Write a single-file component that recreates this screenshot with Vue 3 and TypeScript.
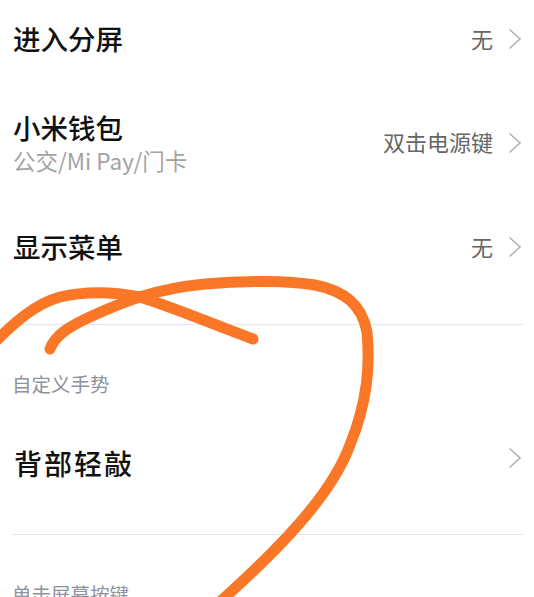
<script setup lang="ts">
interface Row { title: string; sub?: string; value?: string; cls: string }
const topRows: Row[] = [
  { title: '进入分屏', value: '无', cls: 'r1' },
  { title: '小米钱包', sub: '公交/Mi Pay/门卡', value: '双击电源键', cls: 'r2' },
  { title: '显示菜单', value: '无', cls: 'r3' },
]
</script>

<template>
  <div class="page">
    <div v-for="row in topRows" :key="row.title" class="row" :class="row.cls">
      <div class="main">
        <div class="title">{{ row.title }}</div>
        <div v-if="row.sub" class="sub">{{ row.sub }}</div>
      </div>
      <span class="value">{{ row.value }}</span>
      <svg class="chev" width="14" height="22" viewBox="0 0 14 22"><path d="M1.5 1.5 L12 11 L1.5 20.5" fill="none" stroke="#b2b2b4" stroke-width="1.6" /></svg>
    </div>
    <div class="divider first"></div>
    <div class="label l1">自定义手势</div>
    <div class="row r4">
      <div class="main"><div class="title wide">背部轻敲</div></div>
      <svg class="chev up" width="14" height="22" viewBox="0 0 14 22"><path d="M1.5 1.5 L12 11 L1.5 20.5" fill="none" stroke="#b2b2b4" stroke-width="1.6" /></svg>
    </div>
    <div class="divider"></div>
    <div class="label l2">单击屏幕按键</div>
    <svg class="scribble" width="534" height="597" viewBox="0 0 534 597">
      <path d="M50 349 C55 335 70 326 92 316 C125 301 155 289 205 284 C245 280 290 281 315 285 C345 291 362 305 367 332 C370 365 368 400 350 445 C335 485 300 530 222 600" fill="none" stroke="#f97726" stroke-width="11" stroke-linecap="round" />
      <path d="M253 339 C215 325 175 308 140 297 C115 292 85 291 60 297 C35 304 15 322 -5 342" fill="none" stroke="#f97726" stroke-width="11" stroke-linecap="round" />
    </svg>
  </div>
</template>

<style scoped>
.page {
  position: relative;
  width: 534px;
  height: 597px;
  overflow: hidden;
  background: #fff;
  font-family: "Noto Sans CJK SC", "Noto Sans", sans-serif;
}
.row {
  display: flex;
  align-items: center;
  padding: 0 12px 0 13px;
}
.r1 { height: 80px; }
.r2 { height: 130px; }
.r3 { height: 76px; }
.r4 { height: 134px; padding-left: 14px; margin-top: 2px; }
.main { flex: 1; padding-bottom: 4px; }
.r2 .main { padding-bottom: 7px; }
.r4 .main { padding-bottom: 8px; }
.title {
  font-size: 27.5px;
  line-height: 36px;
  font-weight: 500;
  color: #111;
}
.title.wide { font-size: 28px; letter-spacing: 2px; }
.sub {
  font-size: 22.5px;
  line-height: 30px;
  color: #a3a3a3;
}
.value {
  font-size: 22px;
  color: #666;
  margin-right: 15px;
  margin-bottom: 5px;
}
.r2 .value { margin-bottom: 9px; }
.chev { display: block; margin-bottom: 2px; }
.r2 .chev { margin-bottom: 4px; }
.chev.up { margin-top: -16px; }
.divider {
  height: 1px;
  background: #e6e6e8;
  margin: 0 11px 0 12px;
}
.divider.first { margin-top: 38px; }
.label {
  font-size: 19.5px;
  line-height: 28px;
  color: #8f929c;
  padding-left: 12px;
}
.l1 { margin-top: 45px; }
.l2 { margin-top: 45px; }
.scribble {
  position: absolute;
  left: 0;
  top: 0;
}
</style>
